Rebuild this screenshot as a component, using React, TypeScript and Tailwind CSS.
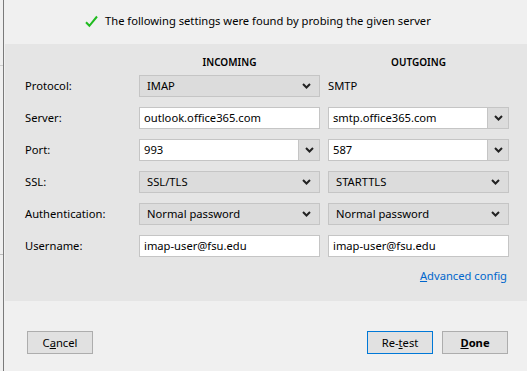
import React from "react";

function Chevron() {
  return (
    <svg width="9" height="6" viewBox="0 0 9 6" aria-hidden>
      <path d="M1 1l3.5 3.5L8 1" fill="none" stroke="#222" strokeWidth="2" />
    </svg>
  );
}

function Select({ value }: { value: string }) {
  return (
    <div className="flex h-[22px] items-center justify-between border border-[#c5c5c5] bg-[#dcdcdc] pl-[7px] pr-[8px]">
      <span>{value}</span>
      <Chevron />
    </div>
  );
}

function Input({ value }: { value: string }) {
  return (
    <div className="flex h-[22px] items-center border border-[#c5c5c5] bg-white px-[4px]">
      {value}
    </div>
  );
}

function Combo({ value }: { value: string }) {
  return (
    <div className="flex h-[22px] border border-[#c5c5c5] bg-white">
      <span className="flex flex-1 items-center px-[4px]">{value}</span>
      <span className="flex w-[21px] items-center justify-center border-l border-[#c5c5c5] bg-[#dcdcdc]">
        <Chevron />
      </span>
    </div>
  );
}

function Row({ label, children }: { label: string; children: React.ReactNode }) {
  return (
    <>
      <div className="flex h-[22px] items-center">{label}</div>
      {children}
    </>
  );
}

function Button({
  children,
  focused,
  bold,
}: {
  children: React.ReactNode;
  focused?: boolean;
  bold?: boolean;
}) {
  return (
    <div
      className={
        "flex h-[23px] w-[66px] items-center justify-center bg-[#e1e1e1] " +
        (focused ? "border border-[#0078d7]" : "border border-[#adadad]") +
        (bold ? " font-bold" : "")
      }
    >
      {children}
    </div>
  );
}

export default function App() {
  return (
    <div className="flex h-[371px] w-[527px] bg-[#f0f0f0] font-['Noto_Sans',sans-serif] text-[11.2px] leading-none text-black">
      <div className="flex w-[4px] flex-col border-r border-[#7a7a7a]">
        <div className="h-[65px]" />
        <div className="h-px bg-[#cfcfcf]" />
        <div className="h-[188px]" />
        <div className="h-px bg-[#bdbdbd]" />
      </div>

      <div className="flex flex-1 flex-col">
        <div className="flex h-[44px] items-center pl-[81px] pb-[2px]">
          <svg width="13" height="13" viewBox="0 0 13 13" aria-hidden>
            <path d="M1 7.2l3.4 3.6L12 1.5" fill="none" stroke="#1fbb1f" strokeWidth="2" />
          </svg>
          <span className="ml-[7px]">The following settings were found by probing the given server</span>
        </div>

        <div className="ml-[1px] flex h-[257px] flex-col bg-[#e5e5e5] pl-[20px] pt-[13px]">
          <div className="grid grid-cols-[106px_181px_181px] gap-x-[8px] gap-y-[10px]">
            <div />
            <div className="-mb-[2px] text-center text-[10px] font-semibold">INCOMING</div>
            <div className="-mb-[2px] text-center text-[10px] font-semibold">OUTGOING</div>

            <Row label="Protocol:">
              <Select value="IMAP" />
              <div className="flex items-center">SMTP</div>
            </Row>
            <Row label="Server:">
              <Input value="outlook.office365.com" />
              <Combo value="smtp.office365.com" />
            </Row>
            <Row label="Port:">
              <Combo value="993" />
              <Combo value="587" />
            </Row>
            <Row label="SSL:">
              <Select value="SSL/TLS" />
              <Select value="STARTTLS" />
            </Row>
            <Row label="Authentication:">
              <Select value="Normal password" />
              <Select value="Normal password" />
            </Row>
            <Row label="Username:">
              <Input value="imap-user@fsu.edu" />
              <Input value="imap-user@fsu.edu" />
            </Row>
          </div>
          <div className="mt-[13px] flex w-[482px] justify-end text-[#0066cc]">
            <span>
              <span className="underline">A</span>dvanced config
            </span>
          </div>
        </div>

        <div className="flex flex-1 items-start pl-[23px] pr-[19px] pt-[30px]">
          <Button>
            C<span className="underline">a</span>ncel
          </Button>
          <div className="flex-1" />
          <div className="flex gap-[9px]">
            <Button focused>
              Re-<span className="underline">t</span>est
            </Button>
            <Button bold>
              <span className="underline">D</span>one
            </Button>
          </div>
        </div>
      </div>
    </div>
  );
}
